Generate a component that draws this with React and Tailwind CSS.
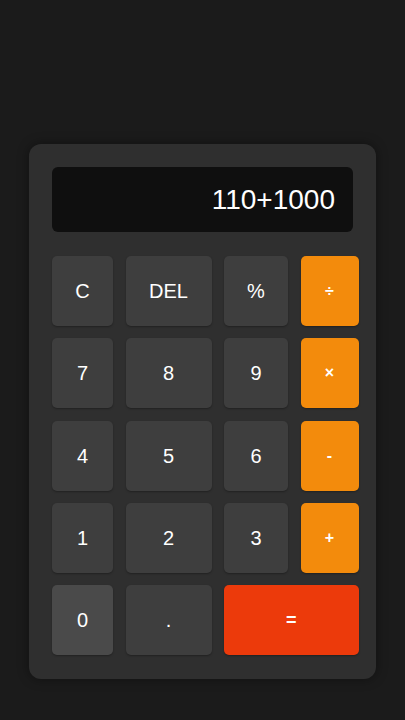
import React from 'react';

const keys = [
    { label: 'C', kind: 'fn' },
    { label: 'DEL', kind: 'fn' },
    { label: '%', kind: 'fn' },
    { label: '÷', kind: 'op' },
    { label: '7' },
    { label: '8' },
    { label: '9' },
    { label: '×', kind: 'op' },
    { label: '4' },
    { label: '5' },
    { label: '6' },
    { label: '-', kind: 'op' },
    { label: '1' },
    { label: '2' },
    { label: '3' },
    { label: '+', kind: 'op' },
    { label: '0', kind: 'zero' },
    { label: '.' },
    { label: '=', kind: 'eq' },
];

const keyClass = (kind) => {
    switch (kind) {
        case 'op':
            return 'bg-[#f38b0c] text-[16px] font-bold';
        case 'eq':
            return 'col-span-2 bg-[#ec3a0b] text-[18px] font-bold';
        case 'zero':
            return 'bg-[#4a4a4a] text-[20px]';
        default:
            return 'bg-[#3e3e3e] text-[20px]';
    }
};

const App = () => {
    return (
        <div className="min-h-[720px] w-full bg-[#1b1b1b] flex justify-center pt-[144px] font-['Liberation_Sans',Arial,sans-serif]">
            <div className="w-[347px] h-[535px] bg-[#2f2f2f] rounded-[12px] pl-[23px] pt-[23px] shadow-[0_0_12px_rgba(0,0,0,0.4)]">
                {/* Display */}
                <div className="w-[301px] h-[65px] bg-[#0f0f0f] rounded-[6px] flex items-center justify-end pr-[18px]">
                    <span className="text-white text-[28px] leading-none">110+1000</span>
                </div>

                {/* Keypad */}
                <div className="mt-[24px] grid grid-cols-[61px_86px_64px_58px] auto-rows-[70px] gap-x-[12.5px] gap-y-[12.3px]">
                    {keys.map((k) => (
                        <button
                            key={k.label}
                            className={`rounded-[5px] text-white flex items-center justify-center shadow-[0_1px_2px_rgba(0,0,0,0.3)] ${keyClass(k.kind)}`}
                        >
                            {k.label}
                        </button>
                    ))}
                </div>
            </div>
        </div>
    );
};

export default App;
